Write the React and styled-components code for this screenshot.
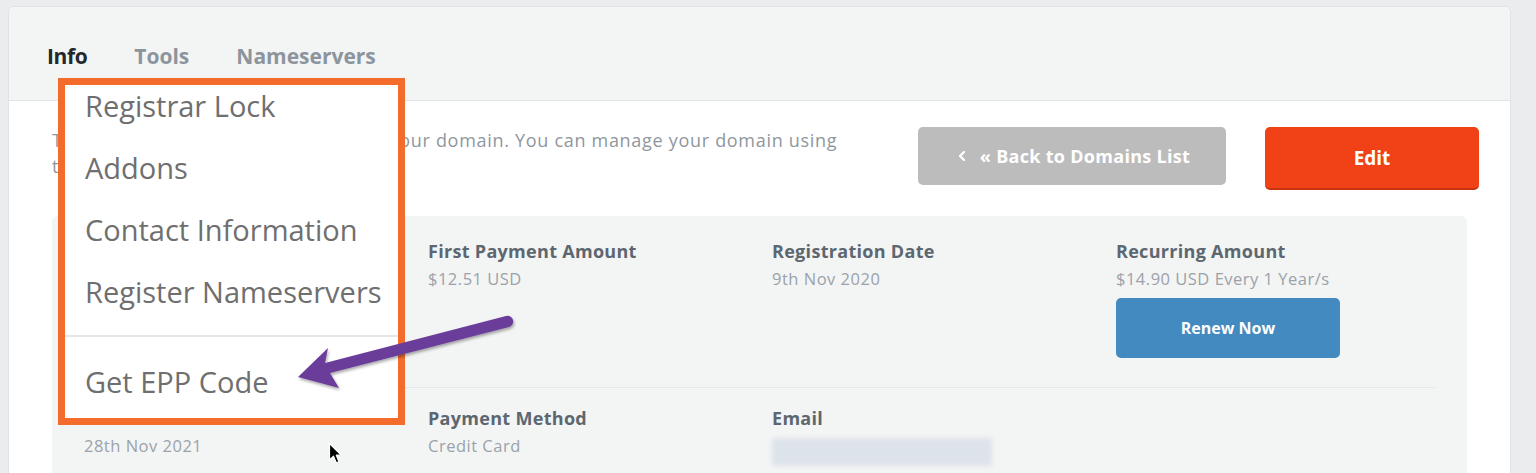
import React from "react";
import styled, { createGlobalStyle } from "styled-components";
import { ChevronLeft } from "lucide-react";

const GlobalStyle = createGlobalStyle`
  html, body { margin: 0; padding: 0; }
  body {
    background: #ebecee;
    font-family: "Open Sans", Lato, Arial, sans-serif;
    overflow: hidden;
  }
  * { box-sizing: border-box; }
`;

const Page = styled.div`
  position: relative;
  height: 473px;
  padding: 6px 25px 0 8px;
  overflow: hidden;
`;

const Card = styled.div`
  background: #fff;
  border: 1px solid #e0e2e4;
  border-bottom: none;
  border-radius: 6px 6px 0 0;
  height: 100%;
`;

const TabBar = styled.div`
  height: 94px;
  background: #f3f4f4;
  border-bottom: 1px solid #e2e4e5;
  border-radius: 6px 6px 0 0;
  display: flex;
  align-items: center;
  gap: 47px;
  padding: 4px 0 0 38px;
`;

const Tab = styled.div`
  font-size: 21px;
  font-weight: 700;
  color: ${(p) => (p.$active ? "#23282d" : "#8c959d")};
  &:first-child {
    letter-spacing: -0.4px;
  }
`;

const Body = styled.div`
  padding: 26px 31px 0 43px;
`;

const TopRow = styled.div`
  display: flex;
  justify-content: space-between;
  align-items: flex-start;
`;

const Desc = styled.p`
  margin: 0;
  font-size: 18px;
  letter-spacing: 0.7px;
  line-height: 26px;
  color: #8f979e;
  white-space: nowrap;
`;

const Buttons = styled.div`
  display: flex;
  gap: 39px;
  align-items: flex-start;
`;

const BackButton = styled.button`
  width: 308px;
  height: 58px;
  border: none;
  border-radius: 5px;
  background: #bcbcbc;
  color: #fff;
  font-family: inherit;
  font-size: 18px;
  letter-spacing: 0.3px;
  font-weight: 700;
  display: flex;
  align-items: center;
  justify-content: center;
  gap: 10px;
  padding-bottom: 2px;
`;

const EditButton = styled.button`
  width: 214px;
  height: 63px;
  border: none;
  border-bottom: 2px solid #c9330f;
  border-radius: 5px;
  background: #f04216;
  color: #fff;
  font-family: inherit;
  font-size: 19px;
  font-weight: 700;
`;

const Panel = styled.div`
  margin: 26px 12px 0 0;
  background: #f3f4f4;
  border-radius: 6px;
  padding: 0 32px;
  height: 300px;
`;

const InfoRow = styled.div`
  display: grid;
  grid-template-columns: repeat(4, 1fr);
  column-gap: 25px;
  padding: 24px 0 29px;
  & + & {
    border-top: 1px solid #e5e7e8;
    padding-top: 19px;
  }
`;

const Field = styled.div`
  display: flex;
  flex-direction: column;
  align-items: flex-start;
`;

const Label = styled.div`
  font-size: 18px;
  letter-spacing: 0.3px;
  line-height: 22px;
  font-weight: 700;
  color: #5d6770;
`;

const Value = styled.div`
  margin-top: 7px;
  font-size: 16.5px;
  letter-spacing: 0.5px;
  line-height: 20px;
  color: #9ba2a9;
`;

const Blurred = styled.div`
  margin-top: 9px;
  width: 220px;
  height: 28px;
  background: #dde3ea;
  filter: blur(2px);
  border-radius: 3px;
`;

const RenewButton = styled.button`
  margin-top: 9px;
  width: 224px;
  height: 60px;
  border: none;
  border-radius: 5px;
  background: #428ac0;
  color: #fff;
  font-family: inherit;
  font-size: 16px;
  font-weight: 700;
`;

const Dropdown = styled.div`
  position: absolute;
  left: 58px;
  top: 78px;
  width: 347px;
  height: 347px;
  border: 7px solid #f36c2b;
  background: #fff;
  overflow: hidden;
`;

const MenuList = styled.div`
  margin-top: -11px;
`;

const MenuItem = styled.div`
  height: 62px;
  display: flex;
  align-items: center;
  padding-left: 20px;
  font-size: 29px;
  color: #6f6f6f;
  white-space: nowrap;
`;

const MenuDivider = styled.div`
  height: 2px;
  background: #e6e6e6;
  margin: 13px 0 13px;
`;

const ArrowSvg = styled.svg`
  position: absolute;
  left: 290px;
  top: 305px;
  overflow: visible;
`;

const CursorSvg = styled.svg`
  position: absolute;
  left: 328px;
  top: 442px;
`;

export default function App() {
  return (
    <>
      <GlobalStyle />
      <Page>
        <Card>
          <TabBar>
            <Tab $active>Info</Tab>
            <Tab>Tools</Tab>
            <Tab>Nameservers</Tab>
          </TabBar>
          <Body>
            <TopRow>
              <Desc>
                This is the domain overview page for your domain. You can manage your domain using
                <br />
                the tabs above.
              </Desc>
              <Buttons>
                <BackButton>
                  <ChevronLeft size={16} strokeWidth={3.5} />
                  <span>« Back to Domains List</span>
                </BackButton>
                <EditButton>Edit</EditButton>
              </Buttons>
            </TopRow>
            <Panel>
              <InfoRow>
                <Field>
                  <Label>Domain</Label>
                  <Value>example.com</Value>
                </Field>
                <Field>
                  <Label>First Payment Amount</Label>
                  <Value>$12.51 USD</Value>
                </Field>
                <Field>
                  <Label>Registration Date</Label>
                  <Value>9th Nov 2020</Value>
                </Field>
                <Field>
                  <Label>Recurring Amount</Label>
                  <Value>$14.90 USD Every 1 Year/s</Value>
                  <RenewButton>Renew Now</RenewButton>
                </Field>
              </InfoRow>
              <InfoRow>
                <Field>
                  <Label>Next Due Date</Label>
                  <Value>28th Nov 2021</Value>
                </Field>
                <Field>
                  <Label>Payment Method</Label>
                  <Value>Credit Card</Value>
                </Field>
                <Field>
                  <Label>Email</Label>
                  <Blurred />
                </Field>
                <Field />
              </InfoRow>
            </Panel>
          </Body>
        </Card>

        <Dropdown>
          <MenuList>
            <MenuItem>Registrar Lock</MenuItem>
            <MenuItem>Addons</MenuItem>
            <MenuItem>Contact Information</MenuItem>
            <MenuItem>Register Nameservers</MenuItem>
            <MenuDivider />
            <MenuItem>Get EPP Code</MenuItem>
          </MenuList>
        </Dropdown>

        <ArrowSvg width="230" height="100" viewBox="0 0 230 100">
          <defs>
            <filter id="arrowShadow" x="-20%" y="-40%" width="140%" height="180%">
              <feDropShadow dx="1" dy="2" stdDeviation="1.5" floodColor="#000" floodOpacity="0.35" />
            </filter>
          </defs>
          <path
            d="M8 72 L38 43 L35 58 L216 11 A5.5 5.5 0 0 1 219 22 L40 68 L49 83 Z"
            fill="#6a3d9b"
            filter="url(#arrowShadow)"
          />
        </ArrowSvg>

        <CursorSvg width="16" height="24" viewBox="0 0 16 24">
          <path
            d="M1.5 1.5 L1.5 18 L5.5 14.2 L8.3 20.8 L11 19.7 L8.3 13.2 L13.5 13.2 Z"
            fill="#000"
            stroke="#fff"
            strokeWidth="1.2"
            strokeLinejoin="round"
          />
        </CursorSvg>
      </Page>
    </>
  );
}
